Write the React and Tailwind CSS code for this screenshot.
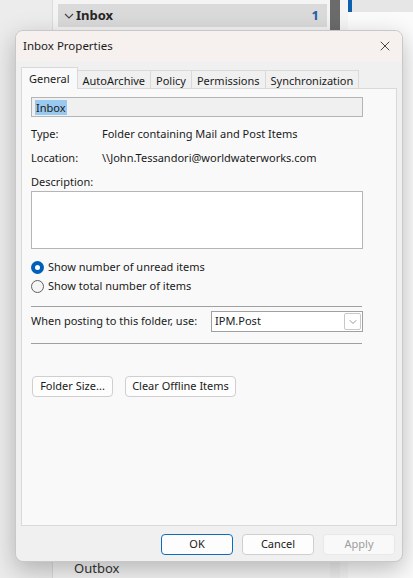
import { X, ChevronDown } from "lucide-react";

const font = { fontFamily: '"Noto Sans", "Open Sans", sans-serif' };

function Tab({ label, active }) {
  if (active) {
    return (
      <div className="relative z-10 h-[22px] px-[7px] pt-[3px] bg-[#f9f9f9] border border-b-0 border-[#d9d9d9] text-[11px] leading-[15px] text-[#1a1a1a]">
        {label}
      </div>
    );
  }
  return (
    <div className="mt-[2px] h-[19px] px-[5px] pt-[3px] bg-[#f0f0f0] border border-l-0 border-[#d9d9d9] text-[11px] leading-[14px] text-[#1a1a1a]">
      {label}
    </div>
  );
}

function Radio({ checked, label }) {
  return (
    <div className="flex items-center gap-[4px] h-[19px]">
      {checked ? (
        <span className="w-[13px] h-[13px] rounded-full bg-[#005fb8] flex items-center justify-center">
          <span className="w-[5px] h-[5px] rounded-full bg-white" />
        </span>
      ) : (
        <span className="w-[13px] h-[13px] rounded-full border border-[#5f5f5f] bg-[#f5f5f5]" />
      )}
      <span className="text-[11px] text-[#1a1a1a]">{label}</span>
    </div>
  );
}

function Btn({ children, className = "" }) {
  return (
    <div className={`h-[21px] flex items-center justify-center rounded-[4px] border text-[11px] ${className}`}>
      {children}
    </div>
  );
}

export default function App() {
  return (
    <div className="relative w-[413px] h-[578px] overflow-hidden bg-[#efefef]" style={font}>
      {/* Outlook window behind */}
      <div className="flex h-full">
        <div className="w-[53px] h-full border-r border-[#dcdcdc] bg-[#ececec]" />
        <div className="w-[277px] h-full bg-[#f4f4f4] flex flex-col justify-between">
          <div className="mt-[4px] ml-[5px] mr-[3px] h-[23px] bg-[#dadada] flex items-center pl-[6px] pr-[8px]">
            <svg width="10" height="10" viewBox="0 0 10 10" className="mr-[2px]">
              <path d="M1 3 L5 7 L9 3" fill="none" stroke="#444" strokeWidth="1.1" />
            </svg>
            <span className="text-[13px] font-bold text-[#262626]">Inbox</span>
            <span className="ml-auto text-[13px] font-bold text-[#1f5fa8]">1</span>
          </div>
          <div className="pl-[21px] pb-[1px] text-[13px] text-[#333] leading-[18px]">Outbox</div>
        </div>
        <div className="w-[10px] h-[30px] bg-[#6b6b6b]" />
        <div className="w-[8px] h-full bg-[#f5f5f5]" />
        <div className="flex-1 h-full bg-[#fbfbfb] flex flex-col">
          <div className="flex h-[12px]">
            <div className="w-[4px] bg-[#0f5fb0]" />
            <div className="flex-1 bg-[#e6e6e6]" />
          </div>
        </div>
      </div>

      {/* Dialog */}
      <div className="absolute left-[15px] top-[30px] w-[388px] h-[532px] rounded-[8px] border border-[#c8c8c8] bg-[#f0f0f0] shadow-[0_8px_24px_rgba(0,0,0,0.25)] flex flex-col overflow-hidden">
        <div className="h-[30px] shrink-0 bg-[#f6f0ee] flex items-center justify-between pl-[7px] pr-[9px]">
          <span className="text-[11.5px] text-[#1a1a1a]">Inbox Properties</span>
          <X size={16} strokeWidth={1.2} color="#1a1a1a" />
        </div>
        <div className="flex-1 flex flex-col px-[5px] pt-[6px]">
          <div className="flex items-end">
            <Tab label="General" active />
            <Tab label="AutoArchive" />
            <Tab label="Policy" />
            <Tab label="Permissions" />
            <Tab label="Synchronization" />
          </div>
          <div className="-mt-px h-[438px] border border-[#d9d9d9] bg-[#f9f9f9] px-[9px] pt-[8px] flex flex-col">
            <div className="w-[332px] h-[20px] border border-[#b5b5b5] bg-[#f0f0f0] flex items-center px-[3px]">
              <span className="bg-[#99c9ef] text-[11px] leading-[15px] text-[#1a1a1a] px-[1px]">Inbox</span>
            </div>
            <div className="mt-[9px] flex text-[11px] text-[#1a1a1a] h-[17px] items-center">
              <span className="w-[71px]">Type:</span>
              <span>Folder containing Mail and Post Items</span>
            </div>
            <div className="mt-[7px] flex text-[11px] text-[#1a1a1a] h-[17px] items-center">
              <span className="w-[71px]">Location:</span>
              <span>\\John.Tessandori@worldwaterworks.com</span>
            </div>
            <div className="mt-[7px] text-[11px] text-[#1a1a1a] h-[17px] flex items-center">Description:</div>
            <div className="w-[332px] h-[58px] border border-[#b5b5b5] bg-white" />
            <div className="mt-[9px] flex flex-col">
              <Radio checked label="Show number of unread items" />
              <Radio label="Show total number of items" />
            </div>
            <div className="mt-[10px] w-[331px] h-px bg-[#a0a0a0]" />
            <div className="mt-[4px] flex items-center w-[332px] justify-between">
              <span className="text-[11px] text-[#1a1a1a] whitespace-nowrap">When posting to this folder, use:</span>
              <div className="w-[152px] h-[21px] border border-[#a0a0a0] bg-white flex items-center justify-between pl-[3px] pr-[1px]">
                <span className="text-[11px] text-[#1a1a1a]">IPM.Post</span>
                <span className="w-[17px] h-[17px] border border-[#c8c8c8] rounded-[2px] flex items-center justify-center">
                  <ChevronDown size={12} strokeWidth={1.2} color="#555" />
                </span>
              </div>
            </div>
            <div className="mt-[11px] w-[331px] h-px bg-[#a0a0a0]" />
            <div className="mt-[32px] flex gap-[12px] pl-px">
              <Btn className="w-[81px] border-[#cfcfcf] bg-[#fdfdfd] text-[#1a1a1a]">Folder Size...</Btn>
              <Btn className="w-[111px] border-[#cfcfcf] bg-[#fdfdfd] text-[#1a1a1a]">Clear Offline Items</Btn>
            </div>
          </div>
          <div className="mt-[8px] flex justify-end gap-[9px] pr-[2px]">
            <Btn className="w-[72px] border-[#0f6cbd] bg-[#fdfdfd] text-[#1a1a1a]">OK</Btn>
            <Btn className="w-[72px] border-[#cfcfcf] bg-[#fdfdfd] text-[#1a1a1a]">Cancel</Btn>
            <Btn className="w-[72px] border-[#e8e8e8] bg-[#f9f9f9] text-[#9d9d9d]">Apply</Btn>
          </div>
        </div>
      </div>
    </div>
  );
}
